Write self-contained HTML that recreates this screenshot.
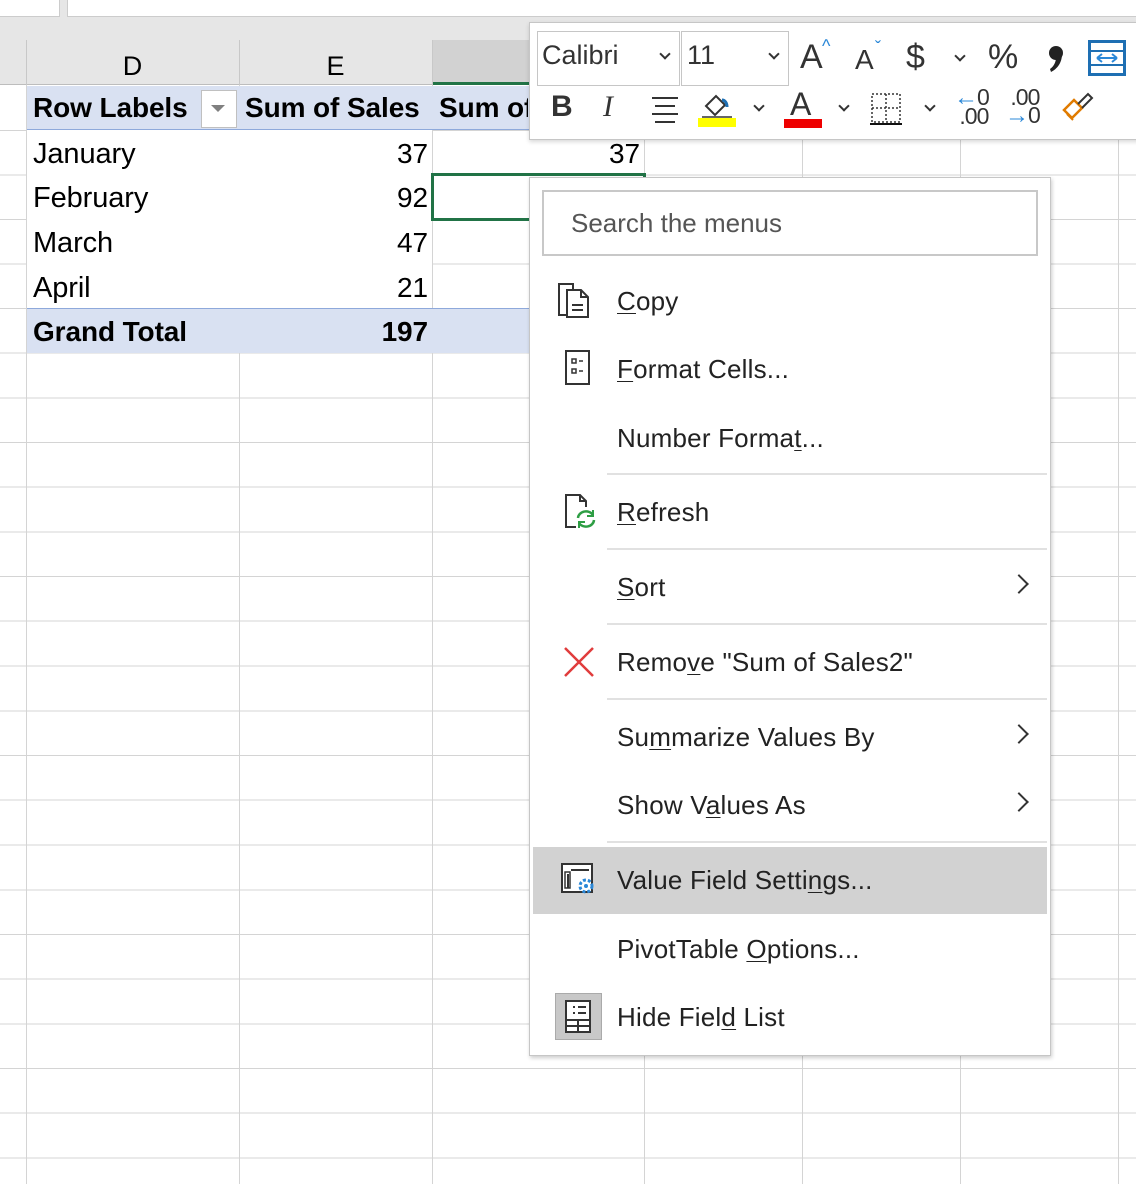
<!DOCTYPE html>
<html><head><meta charset="utf-8">
<style>
*{margin:0;padding:0;box-sizing:border-box}
body{width:1136px;height:1184px;overflow:hidden;background:#fff;position:relative;font-family:"Liberation Sans",sans-serif}
.a{position:absolute}
.cell{position:absolute;font-size:28px;color:#000;line-height:44px;letter-spacing:-0.1px}
.mi{position:absolute;left:617px;font-size:26px;color:#222;line-height:30px;letter-spacing:0.2px}
.sep{position:absolute;left:607px;width:440px;height:2px;background:#e1e1e1}
.chev{position:absolute;left:1012px;width:14px;height:14px;border-right:2px solid #333;border-top:2px solid #333;transform:rotate(45deg)}
u{text-decoration:underline;text-underline-offset:3px;text-decoration-thickness:1px}
</style></head><body>
<div class="a" style="left:0;top:0;width:1136px;height:40px;background:#e6e6e6"></div>
<div class="a" style="left:0;top:0;width:60px;height:17px;background:#fff;border-bottom:1px solid #ccc;border-right:1px solid #ccc"></div>
<div class="a" style="left:67px;top:0;width:1069px;height:17px;background:#fff;border-bottom:1px solid #ccc;border-left:1px solid #ccc"></div>
<div class="a" style="left:0;top:40px;width:1136px;height:45px;background:#e6e6e6;border-bottom:1px solid #bdbdbd"></div>
<div class="a" style="left:432px;top:40px;width:212px;height:45px;background:#d2d2d2;border-bottom:3px solid #217346"></div>
<div class="a" style="left:26px;top:40px;width:1px;height:45px;background:#c8c8c8"></div>
<div class="a" style="left:239px;top:40px;width:1px;height:45px;background:#c8c8c8"></div>
<div class="a" style="left:432px;top:40px;width:1px;height:45px;background:#c8c8c8"></div>
<div class="cell" style="left:26px;top:44px;width:213px;text-align:center;font-size:27px">D</div>
<div class="cell" style="left:239px;top:44px;width:193px;text-align:center;font-size:27px">E</div>
<svg class="a" style="left:0;top:85px" width="1136" height="1099">
<g stroke="#d4d4d4" stroke-width="1">
<line x1="26.5" y1="0" x2="26.5" y2="1099"/><line x1="239.5" y1="0" x2="239.5" y2="1099"/><line x1="432.5" y1="0" x2="432.5" y2="1099"/><line x1="644.5" y1="0" x2="644.5" y2="1099"/><line x1="802.5" y1="0" x2="802.5" y2="1099"/><line x1="960.5" y1="0" x2="960.5" y2="1099"/><line x1="1118.5" y1="0" x2="1118.5" y2="1099"/>
<line x1="0" y1="45.5" x2="1136" y2="45.5"/><line x1="0" y1="90" x2="1136" y2="90"/><line x1="0" y1="134.5" x2="1136" y2="134.5"/><line x1="0" y1="179" x2="1136" y2="179"/><line x1="0" y1="223.5" x2="1136" y2="223.5"/><line x1="0" y1="268" x2="1136" y2="268"/><line x1="0" y1="313" x2="1136" y2="313"/><line x1="0" y1="357.5" x2="1136" y2="357.5"/><line x1="0" y1="402" x2="1136" y2="402"/><line x1="0" y1="447" x2="1136" y2="447"/><line x1="0" y1="491.5" x2="1136" y2="491.5"/><line x1="0" y1="536" x2="1136" y2="536"/><line x1="0" y1="581" x2="1136" y2="581"/><line x1="0" y1="626" x2="1136" y2="626"/><line x1="0" y1="670.5" x2="1136" y2="670.5"/><line x1="0" y1="715" x2="1136" y2="715"/><line x1="0" y1="760" x2="1136" y2="760"/><line x1="0" y1="805" x2="1136" y2="805"/><line x1="0" y1="849.5" x2="1136" y2="849.5"/><line x1="0" y1="894" x2="1136" y2="894"/><line x1="0" y1="939" x2="1136" y2="939"/><line x1="0" y1="983.5" x2="1136" y2="983.5"/><line x1="0" y1="1028" x2="1136" y2="1028"/><line x1="0" y1="1073" x2="1136" y2="1073"/>
</g></svg>
<div class="a" style="left:27px;top:86px;width:510px;height:44px;background:#d9e1f2;border-bottom:1px solid #8ea9db"></div>
<div class="a" style="left:27px;top:130px;width:405px;height:178px;background:#fff"></div>
<div class="a" style="left:27px;top:308px;width:510px;height:45px;background:#d9e1f2;border-top:1px solid #8ea9db"></div>
<div class="cell" style="left:33px;top:86px;font-weight:bold">Row Labels</div>
<div class="a" style="left:201px;top:90px;width:36px;height:38px;background:#fff;border:1px solid #c0c0c0"></div>
<div class="a" style="left:211px;top:105px;width:0;height:0;border-left:7px solid transparent;border-right:7px solid transparent;border-top:7px solid #808080"></div>
<div class="cell" style="left:245px;top:86px;font-weight:bold">Sum of Sales</div>
<div class="cell" style="left:439px;top:86px;font-weight:bold;width:89px;overflow:hidden;white-space:nowrap">Sum of</div>
<div class="cell" style="left:33px;top:132px;font-size:29px">January</div>
<div class="cell" style="left:33px;top:176px;font-size:29px">February</div>
<div class="cell" style="left:33px;top:221px;font-size:29px">March</div>
<div class="cell" style="left:33px;top:266px;font-size:29px">April</div>
<div class="cell" style="left:33px;top:310px;font-weight:bold">Grand Total</div>
<div class="cell" style="left:239px;top:132px;width:189px;text-align:right">37</div>
<div class="cell" style="left:239px;top:176px;width:189px;text-align:right">92</div>
<div class="cell" style="left:239px;top:221px;width:189px;text-align:right">47</div>
<div class="cell" style="left:239px;top:266px;width:189px;text-align:right">21</div>
<div class="cell" style="left:239px;top:310px;width:189px;text-align:right;font-weight:bold">197</div>
<div class="cell" style="left:432px;top:132px;width:208px;text-align:right">37</div>
<div class="a" style="left:431px;top:173px;width:215px;height:48px;border:3px solid #217346"></div>
<div class="a" style="left:529px;top:22px;width:620px;height:118px;background:#fff;border:1px solid #c6c6c6;box-shadow:0 2px 4px rgba(0,0,0,.15)"></div>
<div class="a" style="left:537px;top:31px;width:143px;height:55px;border:1px solid #c6c6c6"></div>
<div class="a" style="left:542px;top:40px;font-size:27px;color:#333">Calibri</div>
<div class="a" style="left:661px;top:50px;width:8px;height:8px;border-right:2px solid #333;border-bottom:2px solid #333;transform:rotate(45deg)"></div>
<div class="a" style="left:681px;top:31px;width:108px;height:55px;border:1px solid #c6c6c6"></div>
<div class="a" style="left:687px;top:40px;font-size:27px;color:#333">11</div>
<div class="a" style="left:770px;top:50px;width:8px;height:8px;border-right:2px solid #333;border-bottom:2px solid #333;transform:rotate(45deg)"></div>
<div class="a" style="left:800px;top:38px;font-size:34px;color:#333">A</div>
<div class="a" style="left:822px;top:36px;font-size:18px;color:#2b88d8">^</div>
<div class="a" style="left:855px;top:44px;font-size:28px;color:#333">A</div>
<div class="a" style="left:875px;top:38px;font-size:18px;color:#2b88d8">ˇ</div>
<div class="a" style="left:906px;top:38px;font-size:34px;color:#333">$</div>
<div class="a" style="left:956px;top:52px;width:8px;height:8px;border-right:2px solid #333;border-bottom:2px solid #333;transform:rotate(45deg)"></div>
<div class="a" style="left:988px;top:38px;font-size:34px;color:#333">%</div>
<svg class="a" style="left:1046px;top:44px" width="22" height="32"><circle cx="10" cy="9" r="7" fill="#222"/><path d="M16 10c0 9-5 15-11 18l-1-3c4-3 6-7 6-12z" fill="#222"/></svg>
<svg class="a" style="left:1088px;top:40px" width="38" height="36"><rect x="1.5" y="1.5" width="35" height="33" fill="#fff" stroke="#1e6fb3" stroke-width="3"/><line x1="1" y1="11" x2="37" y2="11" stroke="#1e6fb3" stroke-width="2"/><line x1="1" y1="25" x2="37" y2="25" stroke="#1e6fb3" stroke-width="2"/><path d="M9 18h20M9 18l5-4M9 18l5 4M29 18l-5-4M29 18l-5 4" stroke="#2b88d8" stroke-width="2" fill="none"/></svg>
<div class="a" style="left:551px;top:90px;font-size:30px;font-weight:bold;color:#333">B</div>
<div class="a" style="left:603px;top:90px;font-size:30px;font-style:italic;font-family:'Liberation Serif',serif;color:#333">I</div>
<svg class="a" style="left:650px;top:94px" width="30" height="30"><path d="M2 4h26M5 12h20M2 20h26M5 28h20" stroke="#333" stroke-width="2"/></svg>
<svg class="a" style="left:698px;top:90px" width="40" height="38"><path d="M8 16l10-10 9 9-10 10z" fill="none" stroke="#333" stroke-width="2"/><path d="M24 10c3 0 5 3 5 7" stroke="#1e6fb3" stroke-width="3" fill="none"/><rect x="0" y="28" width="38" height="9" fill="#ffff00"/><line x1="4" y1="27" x2="34" y2="27" stroke="#333" stroke-width="1.5"/></svg>
<div class="a" style="left:755px;top:102px;width:8px;height:8px;border-right:2px solid #333;border-bottom:2px solid #333;transform:rotate(45deg)"></div>
<div class="a" style="left:790px;top:86px;font-size:32px;color:#333">A</div>
<div class="a" style="left:784px;top:119px;width:38px;height:9px;background:#e00"></div>
<div class="a" style="left:840px;top:102px;width:8px;height:8px;border-right:2px solid #333;border-bottom:2px solid #333;transform:rotate(45deg)"></div>
<svg class="a" style="left:870px;top:92px" width="34" height="34"><rect x="2" y="2" width="28" height="28" fill="none" stroke="#333" stroke-width="1.5" stroke-dasharray="2 2"/><path d="M16 2v28M2 16h28" stroke="#333" stroke-width="1.5" stroke-dasharray="2 2"/><line x1="0" y1="32" x2="32" y2="32" stroke="#111" stroke-width="2"/></svg>
<div class="a" style="left:926px;top:102px;width:8px;height:8px;border-right:2px solid #333;border-bottom:2px solid #333;transform:rotate(45deg)"></div>
<div class="a" style="left:954px;top:88px;font-size:23px;color:#333;line-height:18px;letter-spacing:-1px"><span style="color:#2b88d8;font-size:24px">←</span>0<br>&nbsp;.00</div>
<div class="a" style="left:1005px;top:88px;font-size:23px;color:#333;line-height:18px;letter-spacing:-1px">&nbsp;.00<br><span style="color:#2b88d8;font-size:24px">→</span>0</div>
<svg class="a" style="left:1060px;top:92px" width="34" height="32"><path d="M4 18l10-10 8 8-10 10z" fill="none" stroke="#e07b00" stroke-width="2.5"/><path d="M18 12l10-10 4 4-10 10" fill="none" stroke="#333" stroke-width="2"/><path d="M7 22l6 6" stroke="#e07b00" stroke-width="2"/></svg>
<div class="a" style="left:529px;top:177px;width:522px;height:879px;background:#fff;border:1px solid #c6c6c6;box-shadow:1px 2px 4px rgba(0,0,0,.2)"></div>
<div class="a" style="left:542px;top:190px;width:496px;height:66px;border:2px solid #c8c8c8"></div>
<div class="a" style="left:571px;top:208px;font-size:26px;color:#555">Search the menus</div>
<svg class="a" style="left:556px;top:281px" width="42" height="38"><path d="M10 34H3V3h14v5" fill="none" stroke="#333" stroke-width="2"/><path d="M11 9h14l7 7v20H11z" fill="none" stroke="#333" stroke-width="2"/><path d="M25 9v7h7" fill="none" stroke="#333" stroke-width="2"/><path d="M16 24h11M16 29h11" stroke="#333" stroke-width="2"/></svg>
<div class="mi" style="top:286px"><u>C</u>opy</div>
<svg class="a" style="left:564px;top:349px" width="28" height="38"><rect x="2" y="2" width="23" height="33" fill="none" stroke="#333" stroke-width="2"/><rect x="8" y="10" width="4" height="4" fill="none" stroke="#333" stroke-width="1.5"/><rect x="8" y="20" width="4" height="4" fill="none" stroke="#333" stroke-width="1.5"/><path d="M15 12h4M15 22h4" stroke="#333" stroke-width="1.5"/></svg>
<div class="mi" style="top:354px"><u>F</u>ormat Cells...</div>
<div class="mi" style="top:423px">Number Forma<u>t</u>...</div>
<div class="sep" style="top:473px"></div>
<svg class="a" style="left:564px;top:493px" width="34" height="38"><path d="M12 34H2V2h14l6 6v6" fill="none" stroke="#333" stroke-width="2"/><path d="M16 2v6h6" fill="none" stroke="#333" stroke-width="2"/><path d="M14 25a8 7 0 0 1 15-3M30 27a8 7 0 0 1-15 3" fill="none" stroke="#2e9e44" stroke-width="2.5"/><path d="M29 17v6h-6M15 35v-6h6" fill="none" stroke="#2e9e44" stroke-width="2"/></svg>
<div class="mi" style="top:497px"><u>R</u>efresh</div>
<div class="sep" style="top:548px"></div>
<div class="mi" style="top:572px"><u>S</u>ort</div>
<div class="chev" style="top:577px"></div>
<div class="sep" style="top:623px"></div>
<svg class="a" style="left:563px;top:646px" width="32" height="32"><path d="M2 2l28 28M30 2L2 30" stroke="#e03c3c" stroke-width="2.5"/></svg>
<div class="mi" style="top:647px">Remo<u>v</u>e "Sum of Sales2"</div>
<div class="sep" style="top:698px"></div>
<div class="mi" style="top:722px">Su<u>m</u>marize Values By</div>
<div class="chev" style="top:727px"></div>
<div class="mi" style="top:790px">Show V<u>a</u>lues As</div>
<div class="chev" style="top:795px"></div>
<div class="sep" style="top:841px"></div>
<div class="a" style="left:533px;top:847px;width:514px;height:67px;background:#d2d2d2"></div>
<svg class="a" style="left:560px;top:862px" width="38" height="34"><rect x="2" y="2" width="30" height="28" fill="#fff" stroke="#333" stroke-width="2"/><path d="M11 8h18M8 12v14" stroke="#333" stroke-width="2"/><rect x="5" y="10" width="5" height="16" fill="none" stroke="#333" stroke-width="1.5"/><circle cx="26" cy="24" r="6" fill="none" stroke="#2b88d8" stroke-width="3" stroke-dasharray="3 2"/><circle cx="26" cy="24" r="2" fill="#2b88d8"/></svg>
<div class="mi" style="top:865px">Value Field Setti<u>n</u>gs...</div>
<div class="mi" style="top:934px">PivotTable <u>O</u>ptions...</div>
<div class="a" style="left:555px;top:993px;width:47px;height:47px;background:#c8c8c8;border:1px solid #aaa"></div>
<svg class="a" style="left:565px;top:1000px" width="28" height="34"><rect x="1" y="1" width="24" height="31" fill="#fff" stroke="#333" stroke-width="2"/><path d="M1 20h24M1 26h24M13 20v12M8 7h2M13 7h8M8 13h2M13 13h8" stroke="#333" stroke-width="2"/></svg>
<div class="mi" style="top:1002px">Hide Fiel<u>d</u> List</div>
</body></html>
